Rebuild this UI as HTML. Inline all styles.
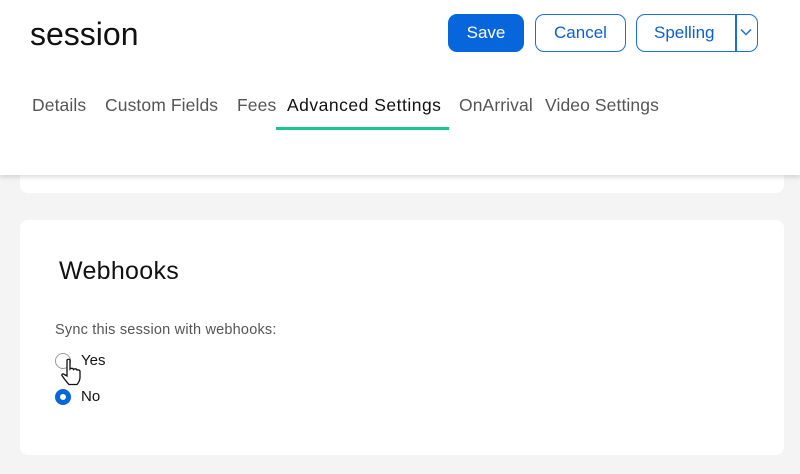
<!DOCTYPE html>
<html><head><style>
*{margin:0;padding:0;box-sizing:border-box}
body{width:800px;height:474px;overflow:hidden;background:#f4f4f5;font-family:"Liberation Sans",sans-serif;position:relative}
.hdr{position:absolute;left:0;top:0;width:800px;height:175px;background:#fff;box-shadow:0 2px 5px rgba(0,0,0,.15);z-index:2}
.t{position:absolute;left:30px;top:16px;font-size:32px;color:#111}
.btn{position:absolute;top:14px;height:38px;border:1.5px solid #1a6fe0;border-radius:9px;color:#0a5fd8;font-size:17px;display:flex;align-items:center;justify-content:center;background:#fff}
.tab{position:absolute;top:95px;font-size:17.5px;color:#555;letter-spacing:.1px}
.card{position:absolute;left:20px;width:764px;background:#fff;border-radius:8px}
.radio{position:absolute;width:16px;height:16px;border-radius:50%}
</style></head><body>
<div class="hdr">
<div class="t">session</div>
<div class="btn" style="left:448px;width:76px;background:#0866dc;color:#fff;border-color:#0866dc">Save</div>
<div class="btn" style="left:535px;width:91px">Cancel</div>
<div class="btn" style="left:636px;width:122px;justify-content:flex-start;padding-left:17px">Spelling
<div style="position:absolute;left:98px;top:0;width:1.5px;height:100%;background:#1a6fe0"></div>
<svg style="position:absolute;left:103px;top:13px" width="12" height="8" viewBox="0 0 12 8"><path d="M1 1.5L6 6.5 11 1.5" fill="none" stroke="#1a6fe0" stroke-width="1.5"/></svg></div>
<div class="tab" style="left:32px">Details</div>
<div class="tab" style="left:105px">Custom Fields</div>
<div class="tab" style="left:237px">Fees</div>
<div class="tab" style="left:287px;color:#111;letter-spacing:.5px">Advanced Settings</div>
<div class="tab" style="left:459px">OnArrival</div>
<div class="tab" style="left:545px">Video Settings</div>
<div style="position:absolute;left:276px;top:127px;width:173px;height:3px;background:#1bc48f"></div>
</div>
<div class="card" style="top:150px;height:43px"></div>
<div class="card" style="top:220px;height:235px">
<div style="position:absolute;left:39px;top:37px;font-size:25px;color:#111;letter-spacing:.3px">Webhooks</div>
<div style="position:absolute;left:35px;top:102px;font-size:14.5px;color:#555;letter-spacing:.2px">Sync this session with webhooks:</div>
<div class="radio" style="left:35px;top:133px;border:1.5px solid #999"></div>
<div style="position:absolute;left:61px;top:132px;font-size:15px;color:#111">Yes</div>
<div class="radio" style="left:35px;top:169px;border:5px solid #0866dc"></div>
<div style="position:absolute;left:61px;top:168px;font-size:15px;color:#111">No</div>
<svg style="position:absolute;left:40px;top:138px" width="24" height="28" viewBox="0 0 24 28"><path d="M7 2c1-1 2.5-1 3 0v9c1-1 3-1 3.5 0.5 1-1 3-1 3.5 0.5 1-.5 3 0 3 1.5v6c0 3-2 6-3 7H9c-2-2-5-6-7-9-.5-1 .5-2 1.5-1.5L7 18z" fill="#fff" stroke="#111" stroke-width="1.3"/></svg>
</div>
</body></html>
